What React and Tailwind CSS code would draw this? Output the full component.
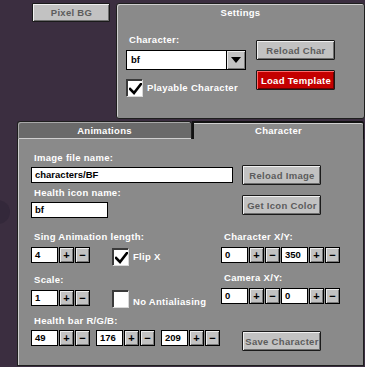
import React from "react";

const F = { fontFamily: '"Liberation Sans", Arial, sans-serif' };

function Btn({ children, w = "w-[79px]", h = "h-[20px]", red = false, className = "" }) {
  return (
    <div className={`${w} ${h} ${className} border border-[#1a1a1a] rounded-[1px] flex`}>
      <div
        className={`flex-1 flex items-center justify-center border-t border-l ${
          red
            ? "bg-[#c40000] border-[#ff6a6a] text-white shadow-[inset_-1px_-1px_0_#6a0000]"
            : "bg-[#c2c2c2] border-[#f0f0f0] text-[#5c5c5c] shadow-[inset_-1px_-1px_0_#6e6e6e]"
        } text-[9.5px] font-bold tracking-[0.3px] leading-none`}
      >
        {children}
      </div>
    </div>
  );
}

function Input({ value, w }) {
  return (
    <div className={`${w} h-[16px] bg-white border border-black flex items-center pl-[3px] text-[9.5px] font-bold text-black leading-none`}>
      {value}
    </div>
  );
}

function Sq({ children }) {
  return (
    <div className="w-[15px] h-[16px] bg-[#c2c2c2] border border-black flex items-center justify-center text-[11px] font-bold text-black leading-none shadow-[inset_1px_1px_0_#ececec,inset_-1px_-1px_0_#7a7a7a]">
      {children}
    </div>
  );
}

function Stepper({ value }) {
  return (
    <div className="flex gap-[1px]">
      <Input value={value} w="w-[27px]" />
      <Sq>+</Sq>
      <Sq>−</Sq>
    </div>
  );
}

function Check({ checked }) {
  return (
    <div className="w-[16px] h-[17px] bg-white border-t-2 border-l-2 border-[#3a3a3a] shadow-[1px_1px_0_#d8d8d8] flex items-center justify-center">
      {checked && (
        <svg width="13" height="12" viewBox="0 0 13 12">
          <path d="M1 6 L5 10 L12 1" stroke="#000" strokeWidth="2.6" fill="none" strokeLinecap="square" />
        </svg>
      )}
    </div>
  );
}

function Label({ children, className = "" }) {
  return (
    <div className={`text-white text-[9.5px] font-bold tracking-[0.3px] leading-[12px] whitespace-nowrap ${className}`}>
      {children}
    </div>
  );
}

export default function App() {
  return (
    <div style={F} className="w-[365px] h-[367px] bg-[#3b2e40] overflow-hidden relative">
      <div className="absolute left-[-14px] top-[200px] w-[24px] h-[24px] rounded-full bg-[#33283a]" />
      {/* Top row */}
      <div className="flex pt-[3px] relative">
        <div className="ml-[32px]">
          <Btn w="w-[78px]" h="h-[19px]">Pixel BG</Btn>
        </div>
        <div className="ml-[6px] w-[249px] h-[116px] bg-[#8a8a8a] border border-[#1e1e1e] rounded-[3px] shadow-[inset_1px_1px_0_#cfcfcf] flex flex-col">
          <Label className="text-center mt-[3px]">Settings</Label>
          <div className="flex mt-[15px]">
            <div className="ml-[9px] w-[120px] flex flex-col">
              <Label className="ml-[3px]">Character:</Label>
              <div className="mt-[4px] h-[20px] flex border border-black bg-white">
                <div className="flex-1 flex items-center pl-[4px] text-[9.5px] font-bold text-black">bf</div>
                <div className="w-[19px] bg-[#c2c2c2] border-l border-black flex items-center justify-center shadow-[inset_1px_1px_0_#ececec,inset_-1px_-1px_0_#7a7a7a]">
                  <svg width="10" height="6" viewBox="0 0 10 6"><path d="M0 0 H10 L5 6 Z" fill="#000" /></svg>
                </div>
              </div>
              <div className="mt-[9px] flex items-center gap-[5px]">
                <Check checked />
                <Label>Playable Character</Label>
              </div>
            </div>
            <div className="ml-[10px] flex flex-col gap-[10px] mt-[6px]">
              <Btn>Reload Char</Btn>
              <Btn red>Load Template</Btn>
            </div>
          </div>
        </div>
      </div>

      {/* Tabs */}
      <div className="ml-[17px] mt-[2px] w-[347px] relative">
        <div className="flex h-[18px]">
          <div className="w-[175px] bg-[#6a6a6a] border border-[#1e1e1e] border-b-0 rounded-t-[3px] shadow-[inset_1px_1px_0_#a8a8a8,inset_0_-1px_0_#cfcfcf] flex items-center justify-center">
            <Label>Animations</Label>
          </div>
          <div className="w-[2px] bg-[#111]" />
          <div className="flex-1 bg-[#8a8a8a] border-t-2 border-r border-[#111] rounded-tr-[3px] shadow-[inset_0_1px_0_#cfcfcf] flex items-center justify-center">
            <Label>Character</Label>
          </div>
        </div>
        <div className="h-[227px] bg-[#8a8a8a] border border-t-0 border-[#1e1e1e] shadow-[inset_1px_0_0_#cfcfcf]">
          <div className="pl-[13px] pt-[13px] flex">
            <div className="w-[211px] flex flex-col">
              <Label className="ml-[3px]">Image file name:</Label>
              <div className="mt-[3px]"><Input value="characters/BF" w="w-[202px]" /></div>
              <Label className="ml-[3px] mt-[4px]">Health icon name:</Label>
              <div className="mt-[3px]"><Input value="bf" w="w-[77px]" /></div>
            </div>
            <div className="flex flex-col mt-[13px] gap-[10px]">
              <Btn>Reload Image</Btn>
              <Btn>Get Icon Color</Btn>
            </div>
          </div>

          <div className="pl-[13px] flex mt-[13px]">
            <div className="w-[190px] flex flex-col">
              <Label className="ml-[3px]">Sing Animation length:</Label>
              <div className="flex mt-[4px] items-start">
                <Stepper value="4" />
                <div className="ml-[22px] mt-[1px] flex items-center gap-[5px]">
                  <Check checked />
                  <Label>Flip X</Label>
                </div>
              </div>
              <Label className="ml-[3px] mt-[9px]">Scale:</Label>
              <div className="flex mt-[4px] items-start">
                <Stepper value="1" />
                <div className="ml-[22px] flex items-end gap-[5px]">
                  <Check />
                  <Label className="mb-[-1px]">No Antialiasing</Label>
                </div>
              </div>
            </div>
            <div className="flex flex-col">
              <Label className="ml-[3px]">Character X/Y:</Label>
              <div className="flex mt-[4px] gap-[1px]">
                <Stepper value="0" />
                <Stepper value="350" />
              </div>
              <Label className="ml-[3px] mt-[9px]">Camera X/Y:</Label>
              <div className="flex mt-[4px] gap-[1px]">
                <Stepper value="0" />
                <Stepper value="0" />
              </div>
            </div>
          </div>
          <div className="pl-[13px] flex flex-col mt-[8px]">
            <Label className="ml-[3px]">Health bar R/G/B:</Label>
            <div className="flex mt-[3px] items-start">
              <div className="flex gap-[6px]">
                <Stepper value="49" />
                <Stepper value="176" />
                <Stepper value="209" />
              </div>
              <div className="ml-[22px] mt-[1px]">
                <Btn>Save Character</Btn>
              </div>
            </div>
          </div>
        </div>
      </div>
    </div>
  );
}
